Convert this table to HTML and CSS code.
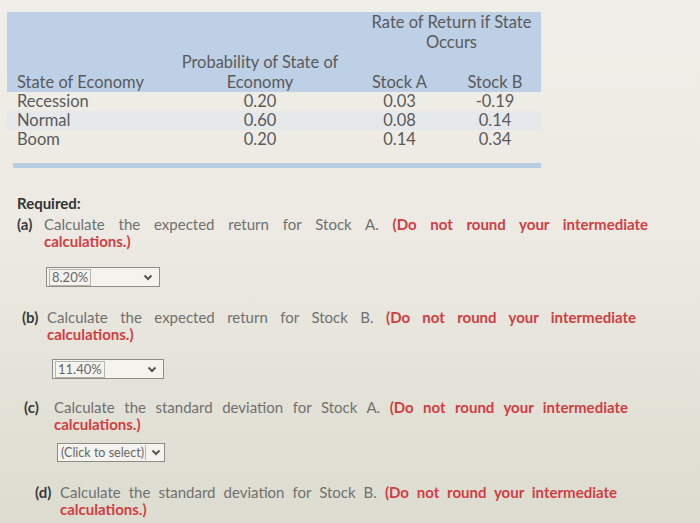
FILE: index.html
```html
<!DOCTYPE html>
<html>
<head>
<meta charset="utf-8">
<link rel="stylesheet" href="styles.css">
</head>
<body>
<div class="page">
  <table class="returns">
    <colgroup>
      <col class="c1"><col class="c2"><col class="c3"><col class="c4">
    </colgroup>
    <thead>
      <tr class="h1">
        <th></th><th></th>
        <th colspan="2" class="span">Rate of Return if State<br>Occurs</th>
      </tr>
      <tr class="h2">
        <th class="left">State of Economy</th>
        <th>Probability of State of<br>Economy</th>
        <th>Stock A</th>
        <th>Stock B</th>
      </tr>
    </thead>
    <tbody>
      <tr><td class="left">Recession</td><td>0.20</td><td>0.03</td><td>-0.19</td></tr>
      <tr class="alt"><td class="left">Normal</td><td>0.60</td><td>0.08</td><td>0.14</td></tr>
      <tr><td class="left">Boom</td><td>0.20</td><td>0.14</td><td>0.34</td></tr>
    </tbody>
  </table>
  <div class="rule"></div>

  <div class="required">Required:</div>

  <div class="q qa">
    <span class="lbl">(a)</span>
    <div class="body">
      <div class="l1">Calculate the expected return for Stock A. <b class="red">(Do not round your intermediate</b></div>
      <div class="l2 red">calculations.)</div>
    </div>
  </div>
  <div class="dd dda"><span class="val">8.20%</span><svg class="chev" width="10" height="7" viewBox="0 0 10 7"><path d="M1.5 1.5 L5 5 L8.5 1.5" fill="none" stroke="#555" stroke-width="2"/></svg></div>

  <div class="q qb">
    <span class="lbl">(b)</span>
    <div class="body">
      <div class="l1">Calculate the expected return for Stock B. <b class="red">(Do not round your intermediate</b></div>
      <div class="l2 red">calculations.)</div>
    </div>
  </div>
  <div class="dd ddb"><span class="val">11.40%</span><svg class="chev" width="10" height="7" viewBox="0 0 10 7"><path d="M1.5 1.5 L5 5 L8.5 1.5" fill="none" stroke="#555" stroke-width="2"/></svg></div>

  <div class="q qc">
    <span class="lbl">(c)</span>
    <div class="body">
      <div class="l1">Calculate the standard deviation for Stock A. <b class="red">(Do not round your intermediate</b></div>
      <div class="l2 red">calculations.)</div>
    </div>
  </div>
  <div class="dd ddc"><span class="val">(Click to select)</span><svg class="chev" width="10" height="7" viewBox="0 0 10 7"><path d="M1.5 1.5 L5 5 L8.5 1.5" fill="none" stroke="#555" stroke-width="2"/></svg></div>

  <div class="q qd">
    <span class="lbl">(d)</span>
    <div class="body">
      <div class="l1">Calculate the standard deviation for Stock B. <b class="red">(Do not round your intermediate</b></div>
      <div class="l2 red">calculations.)</div>
    </div>
  </div>
</div>
</body>
</html>
```

FILE: styles.css
```css
html, body {
  margin: 0;
  padding: 0;
}
body {
  width: 700px;
  height: 523px;
  overflow: hidden;
  background: linear-gradient(to bottom, #efeee8 0%, #eceae2 45%, #dddcd0 100%);
  font-family: Lato, "Open Sans", sans-serif;
  color: #5e5e5e;
}
.page {
  padding: 12px 0 0 7px;
}
.returns {
  border-collapse: collapse;
  width: 534px;
  table-layout: fixed;
  font-size: 16.5px;
  color: #5a5a5a;
}
.c1 { width: 163px; }
.c2 { width: 180px; }
.c3 { width: 99px; }
.c4 { width: 92px; }
.returns thead {
  background: #bdd0e6;
}
.returns th {
  font-weight: 400;
  line-height: 20px;
  padding: 0;
  text-align: center;
  vertical-align: bottom;
}
.returns .h1 th { height: 40px; vertical-align: top; }
.returns .h1 .span { padding-left: 12px; }
.returns .h2 th { height: 39px; }
.returns .left { text-align: left; padding-left: 10px; }
.returns td {
  padding: 0;
  height: 19px;
  line-height: 19px;
  text-align: center;
}
.returns .alt td { background: #e6e9ec; }
.rule {
  width: 528px;
  height: 5px;
  margin: 14px 0 0 6px;
  background: #b9cde2;
}
.required {
  margin: 27px 0 0 10px;
  font-weight: 700;
  font-size: 15px;
  line-height: 17px;
  color: #333;
}
.q {
  display: flex;
  font-size: 15px;
  line-height: 17px;
  color: #707070;
}
.lbl {
  font-weight: 700;
  color: #3a3a3a;
  width: 27px;
  flex: none;
}
.body {
  flex: 1;
  min-width: 0;
}
.l1 {
  text-align: justify;
  text-align-last: justify;
}
.red { color: #d23d42; font-weight: 700; }
.qa { margin: 4px 0 0 10px; width: 631px; }
.qb { margin: 22px 0 0 15px; width: 614px; }
.qb .lbl { width: 25px; }
.qc { margin: 20px 0 0 17px; width: 604px; }
.qc .lbl { width: 30px; }
.qd { margin: 22px 0 0 28px; width: 582px; }
.qd .lbl { width: 25px; }
.dd {
  display: flex;
  align-items: center;
  justify-content: space-between;
  box-sizing: border-box;
  height: 20px;
  border: 1px solid #8d8d88;
  background: #f4f3ee;
  padding: 0 6px 0 2px;
  font-size: 13px;
  color: #666;
}
.val {
  border: 1px solid #b5b5ad;
  padding: 0 2px;
  line-height: 15px;
}
.dda { width: 114px; margin: 17px 0 0 39px; }
.ddb { width: 112px; margin: 16px 0 0 45px; }
.ddc { width: 108px; margin: 10px 0 0 50px; height: 19px; padding-right: 3px; font-size: 12.5px; }
.ddc .val { border: none; border-right: 1px solid #b5b5ad; padding: 0 1px; }
```
